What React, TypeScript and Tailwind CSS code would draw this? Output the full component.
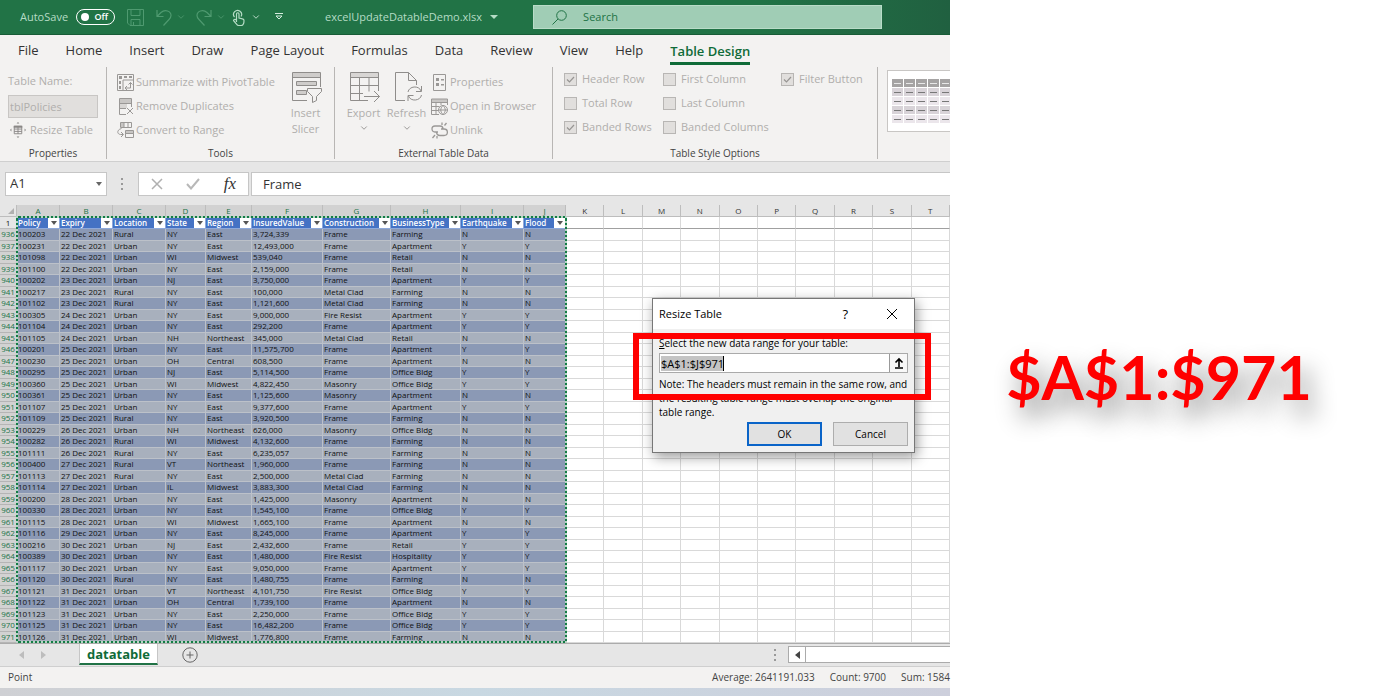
import React from 'react';
import { ChevronDown } from 'lucide-react';

const menuTabs = ['File', 'Home', 'Insert', 'Draw', 'Page Layout', 'Formulas', 'Data', 'Review', 'View', 'Help'];

const headers = [
  'Policy',
  'Expiry',
  'Location',
  'State',
  'Region',
  'InsuredValue',
  'Construction',
  'BusinessType',
  'Earthquake',
  'Flood',
];

const usedColumns = ['A', 'B', 'C', 'D', 'E', 'F', 'G', 'H', 'I', 'J'];
const emptyColumns = ['K', 'L', 'M', 'N', 'O', 'P', 'Q', 'R', 'S', 'T'];

const columnWidths = [
  'w-[17px]',
  'w-[43px]',
  'w-[53px]',
  'w-[53px]',
  'w-[40px]',
  'w-[46px]',
  'w-[71px]',
  'w-[68px]',
  'w-[70px]',
  'w-[63px]',
  'w-[42px]',
];

const firstRow = 936;

const policies = `100203|22 Dec 2021|Rural|NY|East|3,724,339|Frame|Farming|N|N
100231|22 Dec 2021|Urban|NY|East|12,493,000|Frame|Apartment|Y|Y
101098|22 Dec 2021|Urban|WI|Midwest|539,040|Frame|Retail|N|N
101100|22 Dec 2021|Urban|NY|East|2,159,000|Frame|Retail|N|N
100202|23 Dec 2021|Urban|NJ|East|3,750,000|Frame|Apartment|Y|Y
100217|23 Dec 2021|Rural|NY|East|100,000|Metal Clad|Farming|N|N
101102|23 Dec 2021|Rural|NY|East|1,121,600|Metal Clad|Farming|N|N
100305|24 Dec 2021|Urban|NY|East|9,000,000|Fire Resist|Apartment|Y|Y
101104|24 Dec 2021|Urban|NY|East|292,200|Frame|Apartment|Y|Y
101105|24 Dec 2021|Urban|NH|Northeast|345,000|Metal Clad|Retail|N|N
100201|25 Dec 2021|Urban|NY|East|11,575,700|Frame|Apartment|Y|Y
100230|25 Dec 2021|Urban|OH|Central|608,500|Frame|Apartment|N|N
100295|25 Dec 2021|Urban|NJ|East|5,114,500|Frame|Office Bldg|Y|Y
100360|25 Dec 2021|Urban|WI|Midwest|4,822,450|Masonry|Office Bldg|Y|Y
100361|25 Dec 2021|Urban|NY|East|1,125,600|Masonry|Apartment|N|N
101107|25 Dec 2021|Urban|NY|East|9,377,600|Frame|Apartment|Y|Y
101109|25 Dec 2021|Rural|NY|East|3,920,500|Frame|Farming|N|N
100229|26 Dec 2021|Urban|NH|Northeast|626,000|Masonry|Office Bldg|N|N
100282|26 Dec 2021|Rural|WI|Midwest|4,132,600|Frame|Farming|N|N
101111|26 Dec 2021|Rural|NY|East|6,235,057|Frame|Farming|N|N
100400|27 Dec 2021|Rural|VT|Northeast|1,960,000|Frame|Farming|N|N
101113|27 Dec 2021|Rural|NY|East|2,500,000|Metal Clad|Farming|N|N
101114|27 Dec 2021|Urban|IL|Midwest|3,883,300|Metal Clad|Farming|N|N
100200|28 Dec 2021|Urban|NY|East|1,425,000|Masonry|Apartment|N|N
100330|28 Dec 2021|Urban|NY|East|1,545,100|Frame|Office Bldg|Y|Y
101115|28 Dec 2021|Urban|WI|Midwest|1,665,100|Frame|Apartment|N|N
101116|29 Dec 2021|Urban|NY|East|8,245,000|Frame|Apartment|Y|Y
100216|30 Dec 2021|Urban|NJ|East|2,432,600|Frame|Retail|Y|Y
100389|30 Dec 2021|Urban|NY|East|1,480,000|Fire Resist|Hospitality|Y|Y
101117|30 Dec 2021|Urban|NY|East|9,050,000|Frame|Apartment|Y|Y
101120|30 Dec 2021|Rural|NY|East|1,480,755|Frame|Farming|N|N
101121|31 Dec 2021|Urban|VT|Northeast|4,101,750|Fire Resist|Office Bldg|Y|Y
101122|31 Dec 2021|Urban|OH|Central|1,739,100|Frame|Apartment|N|N
101123|31 Dec 2021|Urban|NY|East|2,250,000|Frame|Office Bldg|Y|Y
101125|31 Dec 2021|Urban|NY|East|16,482,200|Frame|Office Bldg|Y|Y
101126|31 Dec 2021|Urban|WI|Midwest|1,776,800|Frame|Farming|N|N`
  .split('\n')
  .map((line) => line.split('|'));

type IconProps = { size?: string; box?: string; children: React.ReactNode };

function Icon({ size = 'size-[17px]', box = '0 0 17 17', children }: IconProps) {
  return (
    <svg className={`${size} shrink-0`} viewBox={box} fill="none" stroke="currentColor" strokeWidth="1" aria-hidden="true">
      {children}
    </svg>
  );
}

function TitleBar() {
  return (
    <header className="flex h-[35px] shrink-0 items-center border-b border-[#185c37] bg-[#217346] bg-linear-to-r from-[#217346] from-80% to-[#206040] text-[#b5dcc5]">
      <label htmlFor="autosave" className="ml-5 text-[11px]">
        AutoSave
      </label>
      <button
        id="autosave"
        role="switch"
        aria-checked="false"
        className="ml-2 flex h-4 w-[39px] items-center justify-between rounded-full border border-white px-1 text-[9px] font-semibold text-white"
      >
        <span className="size-2 rounded-full bg-white" />
        <span className="pr-0.5">Off</span>
      </button>
      <button aria-label="Save" className="ml-3 text-[#4f9a70]">
        <Icon size="size-[17px]">
          <path d="M.5.5h16v16H3L.5 14z M4 .5v6h9v-6 M4 16.5v-6h9v6 M6.500 13v3.500" />
        </Icon>
      </button>
      <button aria-label="Undo" className="ml-3 text-[#4f9a70]">
        <Icon size="h-[17px] w-4" box="0 0 16 17">
          <path d="M1 1v6.500h6.500 M1 7.500L5 3.500c4-3.500 10-1.500 10 3 0 2-1 3-2 4L7.500 16.500" strokeWidth="1.200" />
        </Icon>
      </button>
      <ChevronDown className="ml-1 size-2.5 text-[#4f9a70]" />
      <button aria-label="Redo" className="ml-2.5 text-[#4f9a70]">
        <Icon size="h-[17px] w-4" box="0 0 16 17">
          <path d="M15 1v6.500H8.500 M15 7.500L11 3.500C7 0 1 2 1 6.500c0 2 1 3 2 4l5.500 6" strokeWidth="1.200" />
        </Icon>
      </button>
      <ChevronDown className="ml-1 size-2.5 text-[#4f9a70]" />
      <button aria-label="Touch or mouse mode" className="ml-1.5">
        <Icon size="h-[17px] w-[13px]" box="0 0 13 17">
          <path
            d="M2.500 8A4 4 0 1 1 9 7.500 M4.500 11V5a1.200 1.200 0 0 1 2.500 0v4l3.500.8c1 .2 1.500.8 1.500 1.800 0 2-.5 5-3 5H6.500C5 16.500 4 14 1.500 11.500c0-1 1.500-1.500 3-.5v2"
            strokeWidth="1.200"
          />
        </Icon>
      </button>
      <ChevronDown className="ml-1.5 size-2.5 text-[#d5ecdf]" />
      <button aria-label="Customize toolbar" className="ml-3.5 text-[#d5ecdf]">
        <Icon size="size-2" box="0 0 8 8">
          <path d="M0 .5h8" />
          <path d="M1 3h6L4 6z" />
        </Icon>
      </button>
      <button className="ml-[42px] flex items-center gap-2 text-[11px]">
        excelUpdateDatableDemo.xlsx
        <Icon size="h-1 w-2" box="0 0 8 4">
          <path d="M0 0h8L4 4z" fill="currentColor" stroke="none" />
        </Icon>
      </button>
      <div className="mr-17 ml-[35px] flex h-6 min-w-0 flex-1 items-center border border-[#b9dcc8] bg-[#a0cdb5] pl-[18px] text-[#217346]">
        <Icon size="size-[15px]" box="0 0 15 15">
          <circle cx="9.500" cy="5.500" r="4.800" />
          <path d="M6 9L.5 14.500" />
        </Icon>
        <input
          aria-label="Search"
          placeholder="Search"
          className="ml-4 min-w-0 flex-1 bg-transparent text-[11px] outline-none placeholder:text-[#217346]"
        />
      </div>
    </header>
  );
}

function MenuTabs() {
  return (
    <nav className="flex h-8 shrink-0 items-center gap-[27px] pl-[18px] text-[13px] text-[#333]">
      {menuTabs.map((tab) => (
        <button key={tab} className="whitespace-nowrap">
          {tab}
        </button>
      ))}
      <button className="mt-[3px] border-b-3 border-[#0f6b38] leading-[21px] font-semibold whitespace-nowrap text-[#0f6b38]">
        Table Design
      </button>
    </nav>
  );
}

function Group({ label, width, children }: { label: string; width: string; children: React.ReactNode }) {
  return (
    <section className={`flex shrink-0 flex-col border-r border-[#b8b6b4] ${width}`}>
      <div className="flex flex-1">{children}</div>
      <h2 className="text-center text-[10px] leading-3 text-[#444]">{label}</h2>
    </section>
  );
}

function ToolButton({ icon, children }: { icon: React.ReactNode; children: React.ReactNode }) {
  return (
    <button className="flex h-6 items-center gap-0.5 whitespace-nowrap">
      <span className="text-[#9a9896]">{icon}</span>
      {children}
    </button>
  );
}

function BigButton({ icon, children }: { icon: React.ReactNode; children: React.ReactNode }) {
  return (
    <button className="flex w-[43px] flex-col items-center pt-1 leading-4">
      <span className="mb-0.5 text-[#8f8d8b]">{icon}</span>
      {children}
    </button>
  );
}

function Option({ label, checked = false }: { label: string; checked?: boolean }) {
  return (
    <label className="flex h-6 items-center gap-[5px] whitespace-nowrap">
      <span className="grid">
        <input
          type="checkbox"
          defaultChecked={checked}
          disabled
          className="col-start-1 row-start-1 size-[13px] appearance-none border border-[#b8b6b4] bg-[#e1dfdd]"
        />
        {checked && (
          <svg viewBox="0 0 13 13" className="col-start-1 row-start-1 size-[13px]" fill="none" stroke="#979593" strokeWidth="1.2">
            <path d="M3 6.500l2.500 2.500L10 4" />
          </svg>
        )}
      </span>
      {label}
    </label>
  );
}

function Ribbon() {
  return (
    <div className="flex h-[94px] shrink-0 overflow-hidden pb-0.5 text-[11px] text-[#b0aeac]">
      <Group label="Properties" width="w-[107px]">
        <div className="flex flex-1 flex-col px-2">
          <label htmlFor="table-name" className="flex h-7 items-center">
            Table Name:
          </label>
          <input
            id="table-name"
            defaultValue="tblPolicies"
            disabled
            className="h-[23px] w-full border border-[#c8c6c4] bg-[#e1dfdd] px-px text-[#b0aeac]"
          />
          <button className="flex h-6 items-center gap-1 pl-0.5 whitespace-nowrap">
            <Icon size="size-4">
              <path d="M4.500 4.500h8v8h-8z M4.500 7.500h8 M8.500 4.500v8 M4.500 10h8" stroke="#8a8886" />
              <path d="M4 4h9v2H4z M7 1.500L8.500 0 10 1.500z M7 15.500L8.500 17l1.500-1.500z M1.500 7L0 8.500 1.500 10z M15.500 7L17 8.500 15.500 10z" fill="#8a8886" stroke="none" />
            </Icon>
            Resize Table
          </button>
        </div>
      </Group>

      <Group label="Tools" width="w-[228px]">
        <div className="flex flex-1 flex-col pt-[3px] pl-2.5">
          <ToolButton
            icon={
              <Icon>
                <path d="M.5.5h16v16H.5z M6 6v10 M6 6h10 M6 11h0" />
                <path d="M2 2h3v3H2z M2 7h2v3H2z M2 12h2v3H2z M7 2h3v2H7z M12 2h3v2h-3z" fill="currentColor" stroke="none" />
                <path d="M8 14h5.500V8.500 M10 12l-2 2 2 2 M11.500 10.500l2-2 2 2" />
              </Icon>
            }
          >
            Summarize with PivotTable
          </ToolButton>
          <ToolButton
            icon={
              <Icon>
                <path d="M3 1h11v4H3z" fill="#c8c6c4" stroke="none" />
                <path d="M3 6h7v4H3z" fill="#d8d6d4" stroke="none" />
                <path d="M9 16.500H2.500V.5h12V9 M2.500 5.500h12 M2.500 10.500H9 M10 10l6 6 M16 10l-6 6" />
              </Icon>
            }
          >
            Remove Duplicates
          </ToolButton>
          <ToolButton
            icon={
              <Icon>
                <path d="M9 9h7v2H9z M4 1h3v4H4z" fill="#c8c6c4" stroke="none" />
                <path d="M3.500.5h11v5h-11z M7 .5v5 M11 .5v5 M8.500 8.500h8v3h-8z M8.500 11.500h8v4h-8z" />
                <path d="M4.500 6.500C0 7.500-.5 12 3.500 12.500H6 M4 10l2.500 2.500L4 15" />
              </Icon>
            }
          >
            Convert to Range
          </ToolButton>
        </div>
        <div className="pr-[7px]">
          <BigButton
            icon={
              <Icon size="size-8" box="0 0 32 32">
                <path d="M3 2h27v4H3z M7 11h19v3H7z M7 20h9v3H7z" fill="#cfcdcb" stroke="none" />
                <path d="M17 29.500H2.500V1.500h28V16 M2.500 6.500h28 M6.500 10.500h20v4h-20z M6.500 19.500h10v4h-10z" />
                <path d="M17.500 17.500h14v3l-5 5v4l-4 2v-6l-5-5z" fill="#f3f2f1" />
              </Icon>
            }
          >
            <span>Insert</span>
            <span>Slicer</span>
          </BigButton>
        </div>
      </Group>

      <Group label="External Table Data" width="w-[218px]">
        <div className="flex pl-[7px]">
          <BigButton
            icon={
              <Icon size="size-8" box="0 0 32 32">
                <path d="M3 2h27v4H3z" fill="#d8d6d4" stroke="none" />
                <path d="M20 29.500H2.500V1.500h28V20 M2.500 6.500h28 M2.500 14.500h28 M2.500 22.500H15 M11.500 6.500v23 M21 6.500v14" />
                <path d="M16 25.500h15.500 M26 20l5.500 5.500L26 31" />
              </Icon>
            }
          >
            <span>Export</span>
            <ChevronDown className="mt-0.5 size-2.5 text-[#8a8886]" />
          </BigButton>
          <BigButton
            icon={
              <Icon size="size-8" box="0 0 32 32">
                <path d="M14 29.500H4.500V1.500h13l8 8V14 M17.500 1.500v8h8" />
                <path d="M17 21c1-6 11-7 13-1 M30.500 15v5.500H25 M30.500 24c-1 6-11 7-13 1 M17 30v-5.500h5.500" />
              </Icon>
            }
          >
            <span>Refresh</span>
            <ChevronDown className="mt-0.5 size-2.5 text-[#8a8886]" />
          </BigButton>
        </div>
        <div className="flex flex-1 flex-col pt-[3px] pl-[3px]">
          <ToolButton
            icon={
              <Icon>
                <path d="M2.500.5h12v16h-12z" />
                <path d="M5 4h3v3H5z M5 9h3v3H5z M10 5h3v1.500h-3z M10 10h3v1.500h-3z" fill="currentColor" stroke="none" />
              </Icon>
            }
          >
            Properties
          </ToolButton>
          <ToolButton
            icon={
              <Icon>
                <path d="M1 1h15v3H1z" fill="#c8c6c4" stroke="none" />
                <path d="M8 16.500H.5V1h16v6 M.5 4.500h16 M.5 8.500h8 M.5 12.500h7 M5 4.500v12 M10 4.500V7" />
                <circle cx="12" cy="12" r="4.500" />
                <path d="M7.500 12h9 M12 7.500c-3 3-3 6 0 9 3-3 3-6 0-9" />
              </Icon>
            }
          >
            Open in Browser
          </ToolButton>
          <ToolButton
            icon={
              <Icon>
                <path
                  d="M7 10H4C0 10 0 4 4 4h5c2 0 3 1.500 3 3 M10 7h3c4.500 0 4.500 6.500 0 6.500H9c-2.500 0-4-2-3-4 M11 .5v2.500 M15.500 1L13.500 3.500 M1.500 16l2.500-3 M6 16.500V14"
                  strokeWidth="1.300"
                />
              </Icon>
            }
          >
            Unlink
          </ToolButton>
        </div>
      </Group>

      <Group label="Table Style Options" width="w-[325px]">
        <div className="w-[99px] pl-[11px]">
          <Option label="Header Row" checked />
          <Option label="Total Row" />
          <Option label="Banded Rows" checked />
        </div>
        <div className="w-[118px] pl-[11px]">
          <Option label="First Column" />
          <Option label="Last Column" />
          <Option label="Banded Columns" />
        </div>
        <div className="pl-[11px]">
          <Option label="Filter Button" checked />
        </div>
      </Group>

      <button
        aria-label="Table style"
        className="mt-[3px] ml-[9px] h-[62px] min-w-0 flex-1 overflow-hidden border border-r-0 border-[#c8c6c4] bg-white pl-1"
      >
        <span className="flex w-[84px] flex-col gap-px">
          {[0, 1, 2, 3, 4].map((row) => (
            <span key={row} className="flex gap-px">
              {[0, 1, 2, 3, 4, 5, 6].map((col) => (
                <span
                  key={col}
                  className={`flex h-2 w-[11px] items-center justify-center ${row === 0 ? 'bg-[#a5a3a3]' : row % 2 ? 'bg-[#d8d3d8]' : 'bg-[#ebe6eb]'}`}
                >
                  <span className={`h-px w-[7px] ${row === 0 ? 'bg-[#e8e8e8]' : 'bg-[#777]'}`} />
                </span>
              ))}
            </span>
          ))}
        </span>
      </button>
    </div>
  );
}

function Dots() {
  return (
    <span className="flex flex-col gap-[3px]">
      <span className="size-0.5 bg-[#999]" />
      <span className="size-0.5 bg-[#999]" />
      <span className="size-0.5 bg-[#999]" />
    </span>
  );
}

function FormulaBar() {
  return (
    <div className="flex h-11 shrink-0 items-center border-t border-[#cfcfcf] bg-[#e6e6e6] pl-[5px] text-[13px] text-[#333]">
      <div className="flex h-6 w-[102px] items-center border border-[#c6c6c6] bg-white px-1">
        <input aria-label="Name box" defaultValue="A1" className="min-w-0 flex-1 outline-none" />
        <Icon size="h-1 w-1.5" box="0 0 6 4">
          <path d="M0 0h6L3 4z" fill="#666" stroke="none" />
        </Icon>
      </div>
      <div className="ml-3.5">
        <Dots />
      </div>
      <div className="ml-[15px] flex h-6 w-[111px] items-center justify-between border border-[#c6c6c6] bg-white pr-3 pl-3">
        <button aria-label="Cancel entry" className="text-[#b0b0b0]">
          <Icon size="size-3" box="0 0 12 12">
            <path d="M1 1l10 10 M11 1L1 11" strokeWidth="1.500" />
          </Icon>
        </button>
        <button aria-label="Enter" className="text-[#b8b8b8]">
          <Icon size="h-3 w-3.5" box="0 0 14 12">
            <path d="M1 6l4 4.500L13 1" strokeWidth="2" />
          </Icon>
        </button>
        <button aria-label="Insert function" className="font-['Liberation_Serif',serif] text-[17px] leading-5 italic">
          fx
        </button>
      </div>
      <input
        aria-label="Formula"
        defaultValue="Frame"
        className="ml-0.5 h-6 min-w-0 flex-1 border border-r-0 border-[#c6c6c6] bg-white px-[11px] outline-none"
      />
    </div>
  );
}

function Sheet() {
  return (
    <table className="h-full w-full table-fixed border-separate border-spacing-0 text-left text-[8px] leading-[10px] whitespace-nowrap text-[#111]">
      <colgroup>
        {columnWidths.map((width, i) => (
          <col key={i} className={width} />
        ))}
        {emptyColumns.map((name) => (
          <col key={name} />
        ))}
      </colgroup>
      <thead>
        <tr className="h-3">
          <th className="border-r border-b border-[#bdbdbd] bg-[#e6e6e6]">
            <svg viewBox="0 0 10 8" className="ml-auto h-2 w-2.5" aria-hidden="true">
              <path d="M8 1v6H2z" fill="#b0b0b0" />
            </svg>
          </th>
          {usedColumns.map((name) => (
            <th key={name} className="border-r border-b border-[#bdbdbd] bg-[#d2d2d2] text-center font-medium text-[#217346]">
              {name}
            </th>
          ))}
          {emptyColumns.map((name) => (
            <th key={name} className="border-r border-b border-[#bdbdbd] bg-[#e6e6e6] text-center font-medium text-[#333]">
              {name}
            </th>
          ))}
        </tr>
        <tr className="h-3">
          <th className="border-r border-b border-[#bdbdbd] bg-[#e6e6e6] text-center font-medium">1</th>
          {headers.map((name) => (
            <th key={name} className="overflow-hidden border-r border-b border-[#8ea9db] bg-[#4472c4] pl-px font-semibold text-white">
              <span className="flex justify-between">
                {name}
                <button aria-label={`Filter ${name}`} className="flex h-2.5 w-[11px] shrink-0 items-center justify-center bg-white">
                  <svg viewBox="0 0 6 4" className="h-1 w-1.5">
                    <path d="M0 0h6L3 4z" fill="#555" />
                  </svg>
                </button>
              </span>
            </th>
          ))}
          {emptyColumns.map((name) => (
            <td key={name} className="border-r border-b border-r-[#d9d9d9] border-b-[#a0a0a0] bg-white" />
          ))}
        </tr>
      </thead>
      <tbody>
        {policies.map((policy, i) => (
          <tr key={policy[0]}>
            <th className="border-r border-b border-[#b5b5b5] bg-[#d2d2d2] text-center font-normal text-[#217346]">{firstRow + i}</th>
            {policy.map((value, j) => (
              <td
                key={j}
                className={`border-r border-b border-[#bcc1c9] pl-px font-medium ${i % 2 === 0 ? 'bg-[#8b99b5]' : 'bg-[#a8b0bd]'}`}
              >
                {value}
              </td>
            ))}
            {emptyColumns.map((name) => (
              <td key={name} className="border-r border-b border-[#d9d9d9] bg-white" />
            ))}
          </tr>
        ))}
      </tbody>
    </table>
  );
}

function ResizeDialog() {
  return (
    <div
      role="dialog"
      aria-label="Resize Table"
      className="absolute top-[93px] left-[652px] w-[263px] border border-[#777] bg-[#f0f0f0] text-[10px] leading-[14px] text-black shadow-[2px_4px_12px_rgba(0,0,0,0.4)]"
    >
      <div className="flex h-[30px] items-center bg-white pr-4 pl-1.5 text-[11px]">
        <span className="flex-1">Resize Table</span>
        <button aria-label="Help" className="text-[13px]">
          ?
        </button>
        <button aria-label="Close" className="ml-[38px]">
          <Icon size="size-3" box="0 0 12 12">
            <path d="M1 1l10 10 M11 1L1 11" />
          </Icon>
        </button>
      </div>
      <div className="px-1.5 pt-[7px] pb-1.5">
        <label htmlFor="range">
          <span className="underline">S</span>elect the new data range for your table:
        </label>
        <div className="mt-[3px] flex h-5 border border-[#aaa] bg-white">
          <div className="flex flex-1 items-center pl-px">
            <input
              id="range"
              defaultValue="$A$1:$J$971"
              className="h-[15px] w-[63px] border-r border-black bg-[#c4c4c4] text-[11px] outline-none"
            />
          </div>
          <button aria-label="Collapse dialog" className="flex w-[18px] items-center justify-center border-l border-[#999] bg-[#f8f8f8]">
            <Icon size="size-3" box="0 0 12 12">
              <path d="M6 10V2 M2.500 5.500L6 2l3.500 3.500 M2 11h8" strokeWidth="1.600" />
            </Icon>
          </button>
        </div>
        <p className="mt-1">Note: The headers must remain in the same row, and the resulting table range must overlap the original table range.</p>
        <div className="mt-[3px] flex justify-end gap-[11px]">
          <button className="h-6 w-[75px] border-2 border-[#0a64c8] bg-[#e1e1e1]">OK</button>
          <button className="h-6 w-[75px] border border-[#adadad] bg-[#e1e1e1]">Cancel</button>
        </div>
      </div>
    </div>
  );
}

function SheetTabs() {
  return (
    <div className="flex h-[23px] shrink-0 items-start border-t border-[#ababab] bg-[#e6e6e6]">
      <div className="flex h-full items-center gap-[17px] pl-[19px]">
        <button aria-label="Previous sheet">
          <Icon size="h-2 w-[5px]" box="0 0 5 8">
            <path d="M5 0v8L0 4z" fill="#bdbdbd" stroke="none" />
          </Icon>
        </button>
        <button aria-label="Next sheet">
          <Icon size="h-2 w-[5px]" box="0 0 5 8">
            <path d="M0 0v8l5-4z" fill="#bdbdbd" stroke="none" />
          </Icon>
        </button>
      </div>
      <button className="ml-[33px] h-[21px] border-x border-b-2 border-x-[#c6c6c6] border-b-[#217346] bg-white px-[7px] text-[13px] leading-[18px] font-bold text-[#0f6b38]">
        datatable
      </button>
      <button aria-label="New sheet" className="mt-[3px] ml-6 text-[#666]">
        <Icon size="size-4" box="0 0 16 16">
          <circle cx="8" cy="8" r="7.200" />
          <path d="M8 4.500v7 M4.500 8h7" />
        </Icon>
      </button>
      <div className="flex h-full flex-1 items-center justify-end pr-3">
        <Dots />
      </div>
      <div className="mt-0.5 flex h-[17px] w-[162px] border border-r-0 border-[#ababab] bg-white">
        <button aria-label="Scroll left" className="flex w-[17px] items-center justify-center border-r border-[#ababab]">
          <Icon size="h-2 w-[5px]" box="0 0 5 8">
            <path d="M5 0v8L0 4z" fill="#444" stroke="none" />
          </Icon>
        </button>
      </div>
    </div>
  );
}

function StatusBar() {
  return (
    <footer className="flex h-[22px] shrink-0 items-center border-t border-[#cfcfcf] pl-2 text-[10px] whitespace-nowrap text-[#444]">
      <span className="flex-1">Point</span>
      <div className="flex gap-[15px]">
        <span>Average: 2641191.033</span>
        <span>Count: 9700</span>
        <span>Sum: 1584</span>
      </div>
    </footer>
  );
}

export default function App() {
  return (
    <div className="flex h-screen min-h-[696px] bg-white font-['Open_Sans',sans-serif]">
      <main className="flex min-w-0 flex-[19] flex-col bg-[#f3f2f1]">
        <TitleBar />
        <MenuTabs />
        <Ribbon />
        <FormulaBar />
        <div className="relative min-h-0 flex-1">
          <Sheet />
          {/* Copy marquee round the selected range */}
          <div className="pointer-events-none absolute top-[11px] bottom-0 left-4 w-[551px] border-2 border-[#137c45]">
            <div className="absolute -inset-0.5 border-2 border-dotted border-[#b9d3c6]" />
          </div>
          <ResizeDialog />
          {/* Red highlight over the range field */}
          <div className="pointer-events-none absolute top-32 left-[633px] h-[67px] w-[298px] border-6 border-[#ff0000]" />
        </div>
        <SheetTabs />
        <StatusBar />
        <div className="h-2 shrink-0 bg-linear-to-r from-[#cfd0d4] via-[#c8d8e2] to-[#cdcfdc]" />
      </main>

      <aside className="flex min-w-0 flex-[9] items-center justify-center">
        <p className="pt-14 pr-8 font-['Lato',sans-serif] text-[61px] leading-none font-bold text-[#ff0000] [text-shadow:8px_14px_24px_rgba(0,0,0,0.45)]">
          $A$1:$971
        </p>
      </aside>
    </div>
  );
}
